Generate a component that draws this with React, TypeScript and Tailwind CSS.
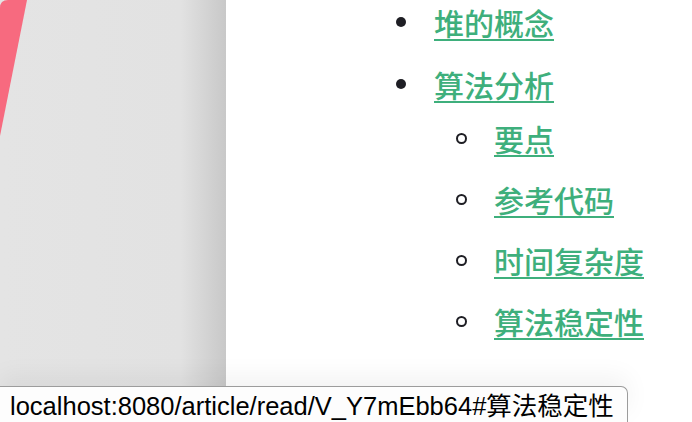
import React from "react";

type Item = { title: string; children?: string[] };

const toc: Item[] = [
  { title: "堆的概念" },
  { title: "算法分析", children: ["要点", "参考代码", "时间复杂度", "算法稳定性"] },
];

const linkClass =
  "text-[#3eaf7c] underline decoration-[2px] underline-offset-[4px] font-medium";

function Row({ text, nested }: { text: string; nested?: boolean }) {
  return (
    <div className="flex h-[54px] items-center">
      {nested ? (
        <span className="mr-[27px] h-[11px] w-[11px] shrink-0 rounded-full border-2 border-[#1e1e24]" />
      ) : (
        <span className="mr-[28px] h-[10px] w-[10px] shrink-0 rounded-full bg-[#1e1e24]" />
      )}
      <a href="#" className={linkClass}>
        {text}
      </a>
    </div>
  );
}

export default function App() {
  return (
    <div
      className="relative flex h-[422px] w-[692px] overflow-hidden bg-white"
      style={{ fontFamily: '"Noto Sans CJK SC", "Noto Sans", sans-serif' }}
    >
      {/* sidebar panel */}
      <aside className="relative h-full w-[226px] shrink-0 bg-[linear-gradient(to_right,#e4e4e4_0%,#e2e2e2_80%,#c8c8c8_100%)]">
        <svg className="absolute left-0 top-0" width="30" height="140" viewBox="0 0 30 140">
          <path d="M0 8 Q0 0 8 0 L27 0 L0 136 Z" fill="#f76a7f" />
        </svg>
      </aside>

      <main className="flex-1 pl-[170px]">
        <ul className="-mt-[5px] text-[30px] leading-[54px]">
          {toc.map((item, i) => (
            <li key={item.title} className={i > 0 ? "mt-[8px]" : ""}>
              <Row text={item.title} />
              {item.children && (
                <ul className="pl-[60px]">
                  {item.children.map((child, j) => (
                    <li key={child} className={j > 0 ? "mt-[7px]" : ""}>
                      <Row text={child} nested />
                    </li>
                  ))}
                </ul>
              )}
            </li>
          ))}
        </ul>
      </main>

      {/* link preview status bar */}
      <div className="absolute bottom-0 left-0 h-[36px] w-[628px] rounded-tr-[7px] border-r border-t border-[#9c9c9c] bg-[#fdfdfd] pl-[10px] shadow-[0_-10px_24px_rgba(0,0,0,0.05)]">
        <span
          className="block text-[25.5px] leading-[39px] text-black"
          style={{ fontFamily: '"Liberation Sans", "Noto Sans CJK SC", sans-serif' }}
        >
          localhost:8080/article/read/V_Y7mEbb64#算法稳定性
        </span>
      </div>
    </div>
  );
}
